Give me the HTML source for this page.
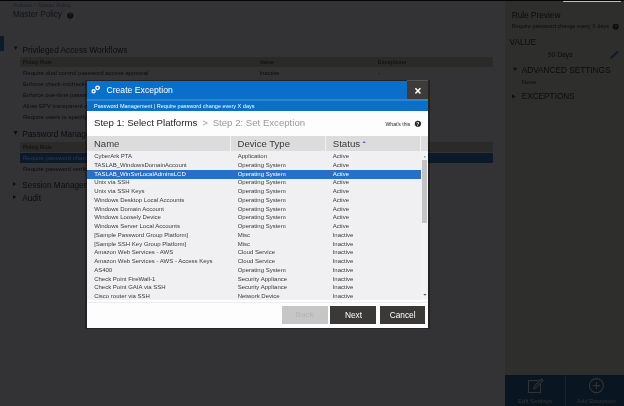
<!DOCTYPE html><html><head><meta charset="utf-8"><style>
html,body{margin:0;padding:0;width:624px;height:406px;overflow:hidden;background:#333335;}
body{position:relative;filter:blur(0.3px);font-family:"Liberation Sans",sans-serif;}
.t{position:absolute;white-space:nowrap;}
.r{position:absolute;}
</style></head><body>
<div class="r" style="left:0px;top:0px;width:624px;height:1.3px;background:#050505;"></div>
<div class="r" style="left:505px;top:1.3px;width:119px;height:405px;background:#2e2e2c;"></div>
<div class="r" style="left:562.5px;top:1px;width:58.5px;height:1.1px;background:#bdbdbd;border-radius:1px"></div>
<div class="t" style="left:13.3px;top:2.59px;font-size:5.45px;line-height:5.45px;color:#1b212b;">Policies &gt; Master Policy</div>
<div class="t" style="left:13px;top:10.69px;font-size:8.16px;line-height:8.16px;color:#121212;">Master Policy</div>
<div class="r" style="left:0px;top:36px;width:3.5px;height:15px;background:#0c1b2c;"></div>
<div class="t" style="left:22.5px;top:46.62px;font-size:8.25px;line-height:8.25px;color:#0c0c0c;">Privileged Access Workflows</div>
<div class="r" style="left:20px;top:57px;width:473px;height:10px;background:#2a2a28;"></div>
<div class="t" style="left:23px;top:60.09px;font-size:5.8px;line-height:5.8px;color:#0c0c0c;">Policy Rule</div>
<div class="t" style="left:259.6px;top:60.09px;font-size:5.8px;line-height:5.8px;color:#0c0c0c;">Value</div>
<div class="t" style="left:377.8px;top:60.09px;font-size:5.8px;line-height:5.8px;color:#0c0c0c;">Exceptions</div>
<div class="t" style="left:23px;top:71.25px;font-size:5.97px;line-height:5.97px;color:#0c0c0c;">Require dual control password access approval</div>
<div class="t" style="left:23px;top:82.25px;font-size:5.97px;line-height:5.97px;color:#0c0c0c;">Enforce check-in/check-out exclusive access</div>
<div class="t" style="left:23px;top:93.25px;font-size:5.97px;line-height:5.97px;color:#0c0c0c;">Enforce one-time password access</div>
<div class="t" style="left:23px;top:104.25px;font-size:5.97px;line-height:5.97px;color:#0c0c0c;">Allow EPV transparent connections</div>
<div class="t" style="left:23px;top:115.25px;font-size:5.97px;line-height:5.97px;color:#0c0c0c;">Require users to specify reason for access</div>
<div class="t" style="left:259.6px;top:71.49px;font-size:5.8px;line-height:5.8px;color:#0c0c0c;">Inactive</div>
<div class="t" style="left:378px;top:71.49px;font-size:5.8px;line-height:5.8px;color:#0c0c0c;">-</div>
<div class="t" style="left:22.2px;top:131.32px;font-size:8.25px;line-height:8.25px;color:#0c0c0c;">Password Management</div>
<div class="r" style="left:19.5px;top:142px;width:473.5px;height:9.5px;background:#2a2a28;"></div>
<div class="t" style="left:23px;top:145.09px;font-size:5.8px;line-height:5.8px;color:#0c0c0c;">Policy Rule</div>
<div class="r" style="left:19.5px;top:152.5px;width:473.5px;height:10.5px;background:#0b1a2a;"></div>
<div class="t" style="left:23px;top:156.15px;font-size:5.97px;line-height:5.97px;color:#2a3a50;">Require password change every X days</div>
<div class="t" style="left:23px;top:167.45px;font-size:5.97px;line-height:5.97px;color:#0c0c0c;">Require password verification every X days</div>
<div class="t" style="left:22.2px;top:182.42px;font-size:8.25px;line-height:8.25px;color:#0c0c0c;">Session Management</div>
<div class="t" style="left:22.2px;top:194.62px;font-size:8.25px;line-height:8.25px;color:#0c0c0c;">Audit</div>
<div class="t" style="left:511.7px;top:11.79px;font-size:8.28px;line-height:8.28px;color:#0c0c0c;">Rule Preview</div>
<div class="t" style="left:511.7px;top:23.84px;font-size:5.5px;line-height:5.5px;color:#0c0c0c;">Require password change every X days</div>
<div class="t" style="left:509.5px;top:38.50px;font-size:8.27px;line-height:8.27px;color:#0c0c0c;">VALUE</div>
<div class="t" style="left:547.7px;top:51.93px;font-size:6.82px;line-height:6.82px;color:#0c0c0c;">90 Days</div>
<div class="t" style="left:521.7px;top:66.71px;font-size:8.26px;line-height:8.26px;color:#0c0c0c;">ADVANCED SETTINGS</div>
<div class="t" style="left:521.7px;top:78.95px;font-size:6.2px;line-height:6.2px;color:#0c0c0c;">None</div>
<div class="t" style="left:521.7px;top:92.72px;font-size:8.24px;line-height:8.24px;color:#0c0c0c;">EXCEPTIONS</div>
<div class="r" style="left:505px;top:375px;width:119px;height:31px;background:#0a1522;"></div>
<div class="r" style="left:565px;top:375px;width:1px;height:31px;background:#142030;"></div>
<div class="t" style="left:518px;top:397.87px;font-size:6.06px;line-height:6.06px;color:#37352f;">Edit Settings</div>
<div class="t" style="left:577px;top:397.93px;font-size:5.99px;line-height:5.99px;color:#37352f;">Add Exception</div>
<svg style="position:absolute;left:0;top:0" width="624" height="406"><circle cx="70.3" cy="15.6" r="3.1" fill="#0e0e0e"/><text x="70.3" y="17.4" font-size="4.8" font-weight="bold" fill="#2e2e2e" text-anchor="middle" font-family="Liberation Sans">?</text><circle cx="615.7" cy="26.8" r="3" fill="#0c0c0c"/><text x="615.7" y="28.5" font-size="4.6" font-weight="bold" fill="#2c2c2a" text-anchor="middle" font-family="Liberation Sans">?</text><path d="M13.8 46.6 L17.4 46.6 L15.6 49.9 Z" fill="#0e0e0e"/><path d="M13.5 131 L17.6 131 L15.55 135 Z" fill="#0e0e0e"/><path d="M13 182 L16.3 184 L13 186 Z" fill="#0e0e0e"/><path d="M13 195 L16.3 197 L13 199 Z" fill="#0e0e0e"/><path d="M513 67.7 L517 67.7 L515 71 Z" fill="#0e0e0e"/><path d="M512 94.5 L515.5 96.5 L512 98.5 Z" fill="#0e0e0e"/><path d="M610 58.8 L610.7 56.7 L617.2 50.8 L618.7 52.3 L612.2 58.2 Z" fill="#0c1a2c"/><g fill="none" stroke="#34332f" stroke-width="1.1"><path d="M538.5 380.5 L528.5 380.5 L528.5 392.5 L540.5 392.5 L540.5 384"/><path d="M533.8 388.6 L534.3 386.2 L541.4 379 L543 380.6 L535.9 387.8 Z"/><circle cx="596.4" cy="385.6" r="7"/><path d="M596.4 382 V389.2 M592.8 385.6 H600"/></g></svg><div class="r" style="left:85.4px;top:80px;width:344.4px;height:248.6px;background:rgba(0,0,0,0.3);"></div>
<div class="r" style="left:86.5px;top:81px;width:341.5px;height:18px;background:#0a6fc8;"></div>
<div class="r" style="left:86.5px;top:99px;width:341.5px;height:1.5px;background:#2f84cf;"></div>
<div class="r" style="left:86.5px;top:100.5px;width:341.5px;height:10px;background:#0a6fc8;"></div>
<div class="r" style="left:407.2px;top:80.3px;width:21.1px;height:18.7px;background:#3d3c3a;border-top:1.5px solid #555453;box-sizing:border-box"></div>
<svg style="position:absolute;left:0;top:0" width="624" height="406"><g stroke="#fff" stroke-width="1.5"><line x1="415.4" y1="88.2" x2="420.4" y2="93.6"/><line x1="420.4" y1="88.2" x2="415.4" y2="93.6"/></g><g fill="none" stroke="#fff"><circle cx="97.55" cy="87.85" r="1.75" stroke-width="1.4"/><circle cx="93.6" cy="91.3" r="1.55" stroke-width="1.3"/></g></svg><div class="t" style="left:106.4px;top:85.96px;font-size:8.67px;line-height:8.67px;color:#fff;">Create Exception</div>
<div class="t" style="left:94.1px;top:104.11px;font-size:5.54px;line-height:5.54px;color:#fff;">Password Management | Require password change every X days</div>
<div class="r" style="left:86.5px;top:110.5px;width:341.5px;height:217px;background:#fdfdfd;"></div>
<div class="t" style="left:94px;top:117.63px;font-size:9.65px;line-height:9.65px;color:#1e1e1e;">Step 1: Select Platforms</div>
<div class="t" style="left:202.4px;top:119.13px;font-size:9.3px;line-height:9.3px;color:#9a9a9a;">&gt;</div>
<div class="t" style="left:212.7px;top:117.66px;font-size:9.62px;line-height:9.62px;color:#9a9a9a;">Step 2: Set Exception</div>
<div class="t" style="left:385.5px;top:122.08px;font-size:5.1px;line-height:5.1px;color:#222;">What's this</div>
<div class="r" style="left:87px;top:136px;width:341px;height:15px;background:#dcdcdc;"></div>
<div class="r" style="left:230px;top:136px;width:1px;height:15px;background:#f2f2f2;"></div>
<div class="r" style="left:325px;top:136px;width:1px;height:15px;background:#f2f2f2;"></div>
<div class="r" style="left:420px;top:136px;width:1px;height:15px;background:#f2f2f2;"></div>
<div class="t" style="left:94px;top:138.76px;font-size:9.5px;line-height:9.5px;color:#3a3a3a;">Name</div>
<div class="t" style="left:237.6px;top:138.72px;font-size:9.55px;line-height:9.55px;color:#3a3a3a;">Device Type</div>
<div class="t" style="left:332.7px;top:138.59px;font-size:9.7px;line-height:9.7px;color:#3a3a3a;">Status</div>
<div class="r" style="left:87px;top:151px;width:334px;height:149px;background:#f0f0f2;"></div>
<div class="r" style="left:421px;top:151px;width:6.8px;height:148px;background:#f2f2f4;"></div>
<div class="t" style="left:94.2px;top:153.02px;font-size:6.0px;line-height:6.0px;color:#3a3a3a;">CyberArk PTA</div>
<div class="t" style="left:237.7px;top:153.02px;font-size:6.0px;line-height:6.0px;color:#3a3a3a;">Application</div>
<div class="t" style="left:332.7px;top:153.02px;font-size:6.0px;line-height:6.0px;color:#3a3a3a;">Active</div>
<div class="t" style="left:94.2px;top:161.77px;font-size:6.0px;line-height:6.0px;color:#3a3a3a;">TASLAB_WindowsDomainAccount</div>
<div class="t" style="left:237.7px;top:161.77px;font-size:6.0px;line-height:6.0px;color:#3a3a3a;">Operating System</div>
<div class="t" style="left:332.7px;top:161.77px;font-size:6.0px;line-height:6.0px;color:#3a3a3a;">Active</div>
<div class="r" style="left:87px;top:169.5px;width:334px;height:9px;background:#2a6fc6;"></div>
<div class="t" style="left:94.2px;top:170.52px;font-size:6.0px;line-height:6.0px;color:#fff;">TASLAB_WinSvrLocalAdminsLCD</div>
<div class="t" style="left:237.7px;top:170.52px;font-size:6.0px;line-height:6.0px;color:#fff;">Operating System</div>
<div class="t" style="left:332.7px;top:170.52px;font-size:6.0px;line-height:6.0px;color:#fff;">Active</div>
<div class="t" style="left:94.2px;top:179.27px;font-size:6.0px;line-height:6.0px;color:#3a3a3a;">Unix via SSH</div>
<div class="t" style="left:237.7px;top:179.27px;font-size:6.0px;line-height:6.0px;color:#3a3a3a;">Operating System</div>
<div class="t" style="left:332.7px;top:179.27px;font-size:6.0px;line-height:6.0px;color:#3a3a3a;">Active</div>
<div class="t" style="left:94.2px;top:188.02px;font-size:6.0px;line-height:6.0px;color:#3a3a3a;">Unix via SSH Keys</div>
<div class="t" style="left:237.7px;top:188.02px;font-size:6.0px;line-height:6.0px;color:#3a3a3a;">Operating System</div>
<div class="t" style="left:332.7px;top:188.02px;font-size:6.0px;line-height:6.0px;color:#3a3a3a;">Active</div>
<div class="t" style="left:94.2px;top:196.77px;font-size:6.0px;line-height:6.0px;color:#3a3a3a;">Windows Desktop Local Accounts</div>
<div class="t" style="left:237.7px;top:196.77px;font-size:6.0px;line-height:6.0px;color:#3a3a3a;">Operating System</div>
<div class="t" style="left:332.7px;top:196.77px;font-size:6.0px;line-height:6.0px;color:#3a3a3a;">Active</div>
<div class="t" style="left:94.2px;top:205.52px;font-size:6.0px;line-height:6.0px;color:#3a3a3a;">Windows Domain Account</div>
<div class="t" style="left:237.7px;top:205.52px;font-size:6.0px;line-height:6.0px;color:#3a3a3a;">Operating System</div>
<div class="t" style="left:332.7px;top:205.52px;font-size:6.0px;line-height:6.0px;color:#3a3a3a;">Active</div>
<div class="t" style="left:94.2px;top:214.27px;font-size:6.0px;line-height:6.0px;color:#3a3a3a;">Windows Loosely Device</div>
<div class="t" style="left:237.7px;top:214.27px;font-size:6.0px;line-height:6.0px;color:#3a3a3a;">Operating System</div>
<div class="t" style="left:332.7px;top:214.27px;font-size:6.0px;line-height:6.0px;color:#3a3a3a;">Active</div>
<div class="t" style="left:94.2px;top:223.02px;font-size:6.0px;line-height:6.0px;color:#3a3a3a;">Windows Server Local Accounts</div>
<div class="t" style="left:237.7px;top:223.02px;font-size:6.0px;line-height:6.0px;color:#3a3a3a;">Operating System</div>
<div class="t" style="left:332.7px;top:223.02px;font-size:6.0px;line-height:6.0px;color:#3a3a3a;">Active</div>
<div class="t" style="left:94.2px;top:231.77px;font-size:6.0px;line-height:6.0px;color:#3a3a3a;">[Sample Password Group Platform]</div>
<div class="t" style="left:237.7px;top:231.77px;font-size:6.0px;line-height:6.0px;color:#3a3a3a;">Misc</div>
<div class="t" style="left:332.7px;top:231.77px;font-size:6.0px;line-height:6.0px;color:#3a3a3a;">Inactive</div>
<div class="t" style="left:94.2px;top:240.52px;font-size:6.0px;line-height:6.0px;color:#3a3a3a;">[Sample SSH Key Group Platform]</div>
<div class="t" style="left:237.7px;top:240.52px;font-size:6.0px;line-height:6.0px;color:#3a3a3a;">Misc</div>
<div class="t" style="left:332.7px;top:240.52px;font-size:6.0px;line-height:6.0px;color:#3a3a3a;">Inactive</div>
<div class="t" style="left:94.2px;top:249.27px;font-size:6.0px;line-height:6.0px;color:#3a3a3a;">Amazon Web Services - AWS</div>
<div class="t" style="left:237.7px;top:249.27px;font-size:6.0px;line-height:6.0px;color:#3a3a3a;">Cloud Service</div>
<div class="t" style="left:332.7px;top:249.27px;font-size:6.0px;line-height:6.0px;color:#3a3a3a;">Inactive</div>
<div class="t" style="left:94.2px;top:258.02px;font-size:6.0px;line-height:6.0px;color:#3a3a3a;">Amazon Web Services - AWS - Access Keys</div>
<div class="t" style="left:237.7px;top:258.02px;font-size:6.0px;line-height:6.0px;color:#3a3a3a;">Cloud Service</div>
<div class="t" style="left:332.7px;top:258.02px;font-size:6.0px;line-height:6.0px;color:#3a3a3a;">Inactive</div>
<div class="t" style="left:94.2px;top:266.77px;font-size:6.0px;line-height:6.0px;color:#3a3a3a;">AS400</div>
<div class="t" style="left:237.7px;top:266.77px;font-size:6.0px;line-height:6.0px;color:#3a3a3a;">Operating System</div>
<div class="t" style="left:332.7px;top:266.77px;font-size:6.0px;line-height:6.0px;color:#3a3a3a;">Inactive</div>
<div class="t" style="left:94.2px;top:275.52px;font-size:6.0px;line-height:6.0px;color:#3a3a3a;">Check Point FireWall-1</div>
<div class="t" style="left:237.7px;top:275.52px;font-size:6.0px;line-height:6.0px;color:#3a3a3a;">Security Appliance</div>
<div class="t" style="left:332.7px;top:275.52px;font-size:6.0px;line-height:6.0px;color:#3a3a3a;">Inactive</div>
<div class="t" style="left:94.2px;top:284.27px;font-size:6.0px;line-height:6.0px;color:#3a3a3a;">Check Point GAIA via SSH</div>
<div class="t" style="left:237.7px;top:284.27px;font-size:6.0px;line-height:6.0px;color:#3a3a3a;">Security Appliance</div>
<div class="t" style="left:332.7px;top:284.27px;font-size:6.0px;line-height:6.0px;color:#3a3a3a;">Inactive</div>
<div class="t" style="left:94.2px;top:293.02px;font-size:6.0px;line-height:6.0px;color:#3a3a3a;">Cisco router via SSH</div>
<div class="t" style="left:237.7px;top:293.02px;font-size:6.0px;line-height:6.0px;color:#3a3a3a;">Network Device</div>
<div class="t" style="left:332.7px;top:293.02px;font-size:6.0px;line-height:6.0px;color:#3a3a3a;">Inactive</div>
<div class="r" style="left:422px;top:159.7px;width:4.7px;height:63px;background:#c3c3c3;"></div>
<div class="r" style="left:86.5px;top:300px;width:341.5px;height:1px;background:#ffffff;"></div>
<div class="r" style="left:86.5px;top:302px;width:341.5px;height:1px;background:#ececec;"></div>
<div class="r" style="left:281.5px;top:305.7px;width:46px;height:18.2px;background:#c6c6c6;"></div>
<div class="r" style="left:330.3px;top:305.7px;width:46.1px;height:18.2px;background:#3a3937;"></div>
<div class="r" style="left:379.7px;top:305.7px;width:45px;height:18.2px;background:#3a3937;"></div>
<div class="t" style="left:295.8px;top:311.43px;font-size:8.0px;line-height:8.0px;color:#b0b3b8;">Back</div>
<div class="t" style="left:344.9px;top:311.09px;font-size:8.4px;line-height:8.4px;color:#fff;">Next</div>
<div class="t" style="left:389.7px;top:311.17px;font-size:8.3px;line-height:8.3px;color:#fff;">Cancel</div>
<svg style="position:absolute;left:0;top:0" width="624" height="406"><circle cx="417.9" cy="123.75" r="3.1" fill="#222"/><text x="417.9" y="125.9" font-size="5" font-weight="bold" fill="#fff" text-anchor="middle" font-family="Liberation Sans">?</text><path d="M362.4 143 L365.8 143 L364.1 141 Z" fill="#3a72d0"/><path d="M423.8 157.2 L425.8 157.2 L424.8 155.9 Z" fill="#555"/><path d="M423.3 294 L426.6 294 L424.95 295.8 Z" fill="#555"/></svg></body></html>
